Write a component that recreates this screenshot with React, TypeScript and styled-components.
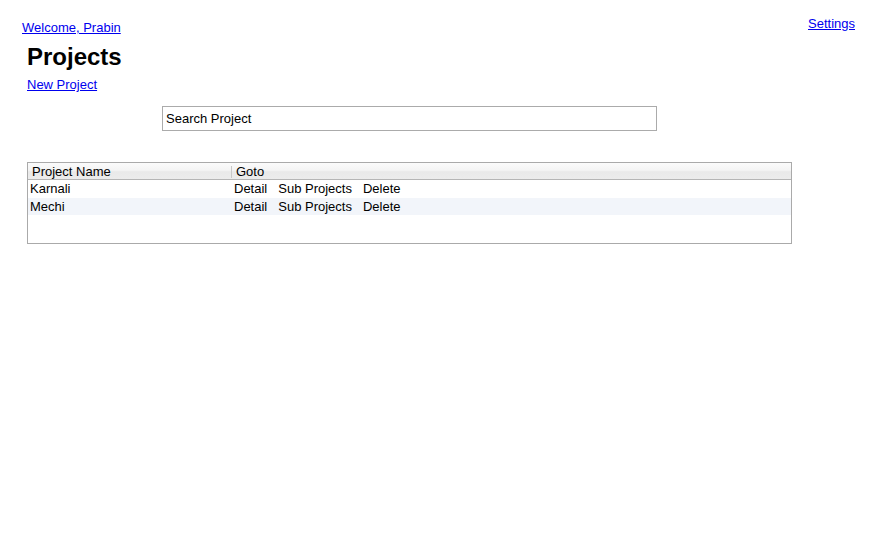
import React from "react";
import styled, { createGlobalStyle } from "styled-components";

const Global = createGlobalStyle`
  html, body { margin: 0; padding: 0; background: #fff; }
  body { font-family: "Liberation Sans", Arial, sans-serif; font-size: 13px; color: #000; }
  * { box-sizing: border-box; }
`;

const Page = styled.div`
  padding: 16px 33px 0 0;
  display: flex;
  flex-direction: column;
`;

const TopBar = styled.div`
  display: flex;
  justify-content: space-between;
  align-items: flex-start;
`;

const Link = styled.a<{ $offset?: number }>`
  color: #0000ee;
  text-decoration: underline;
  font-size: 13px;
  line-height: 15px;
  margin-top: ${(p) => p.$offset ?? 0}px;
  cursor: pointer;
`;

const WelcomeLink = styled(Link)`
  margin-left: 22px;
`;

const Main = styled.div`
  padding-left: 27px;
  display: flex;
  flex-direction: column;
  align-items: flex-start;
`;

const Title = styled.h1`
  margin: 8px 0 0 0;
  font-size: 24px;
  line-height: 28px;
  font-weight: bold;
`;

const NewLink = styled(Link)`
  margin-top: 6px;
`;

const Search = styled.input`
  margin: 14px 0 0 135px;
  width: 495px;
  height: 25px;
  border: 1px solid #ababab;
  padding: 0 3px;
  font-family: "Liberation Sans", Arial, sans-serif;
  font-size: 13px;
  color: #000;
  outline: none;
  &::placeholder { color: #000; }
`;

const Grid = styled.div`
  margin-top: 31px;
  width: 765px;
  height: 82px;
  border: 1px solid #aaaaaa;
  display: flex;
  flex-direction: column;
`;

const HeaderRow = styled.div`
  display: grid;
  grid-template-columns: 204px 1fr;
  height: 17px;
  background: linear-gradient(#fbfbfb 0%, #f4f4f4 45%, #e9e9e9 55%, #ececec 100%);
  border-bottom: 1px solid #b5b5b5;
`;

const HeaderCell = styled.div<{ $sep?: boolean }>`
  line-height: 15px;
  padding: 1px 0 0 4px;
  white-space: nowrap;
  position: relative;
  ${(p) =>
    p.$sep &&
    `&::after { content: ""; position: absolute; right: 0; top: 3px; bottom: 1px; width: 1px; background: #c8c8c8; }`}
`;

const Row = styled.div<{ $alt?: boolean }>`
  display: grid;
  grid-template-columns: 204px 1fr;
  height: 17.5px;
  background: ${(p) => (p.$alt ? "#f2f5fa" : "#fff")};
`;

const Cell = styled.div`
  line-height: 17.5px;
  padding-left: 2px;
  white-space: nowrap;
`;

const Actions = styled(Cell)`
  display: flex;
  gap: 11px;
`;

const rows = ["Karnali", "Mechi"];

export default function App() {
  return (
    <>
      <Global />
      <Page>
        <TopBar>
          <WelcomeLink $offset={4}>Welcome, Prabin</WelcomeLink>
          <Link>Settings</Link>
        </TopBar>
        <Main>
          <Title>Projects</Title>
          <NewLink>New Project</NewLink>
          <Search defaultValue="Search Project" />
          <Grid>
            <HeaderRow>
              <HeaderCell $sep>Project Name</HeaderCell>
              <HeaderCell>Goto</HeaderCell>
            </HeaderRow>
            {rows.map((name, i) => (
              <Row key={name} $alt={i % 2 === 1}>
                <Cell>{name}</Cell>
                <Actions>
                  <span>Detail</span>
                  <span>Sub Projects</span>
                  <span>Delete</span>
                </Actions>
              </Row>
            ))}
          </Grid>
        </Main>
      </Page>
    </>
  );
}
